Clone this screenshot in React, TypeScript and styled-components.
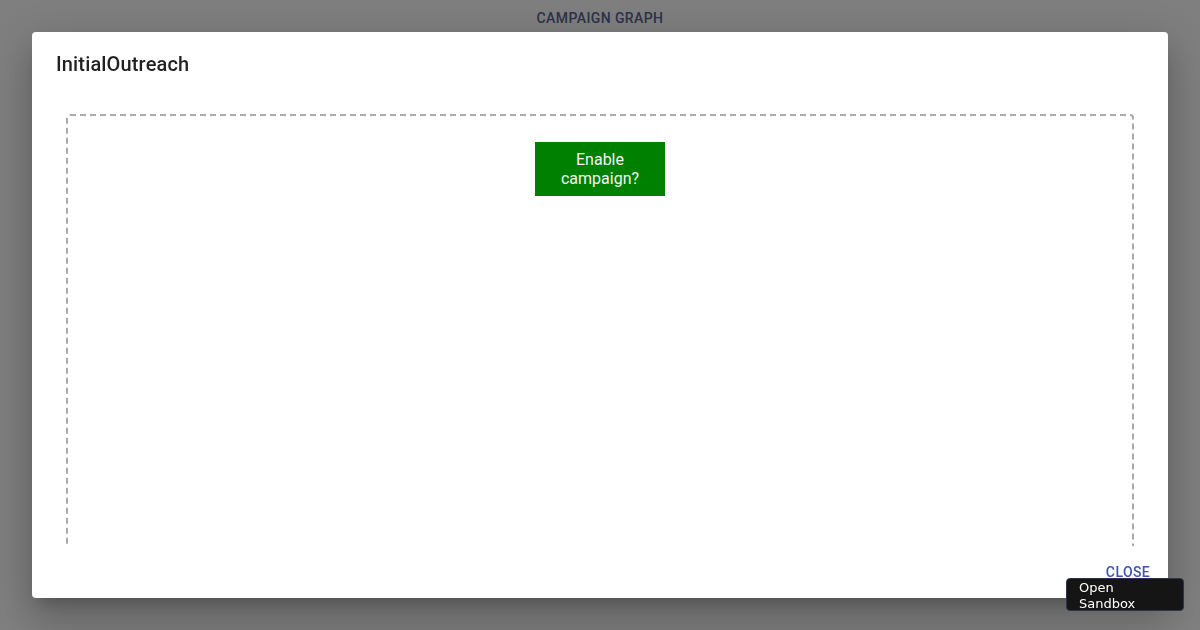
import React from 'react';
import styled, { createGlobalStyle } from 'styled-components';

const GlobalStyle = createGlobalStyle`
  html, body {
    height: 100%;
    margin: 0;
    overflow: hidden;
    background: #fff;
    font-family: Roboto, "Liberation Sans", Arial, sans-serif;
  }
`;

const Page = styled.div`
  height: 100vh;
  display: flex;
  flex-direction: column;
  align-items: center;
`;

const PageHeader = styled.div`
  padding-top: 6px;
  font-size: 14px;
  font-weight: 500;
  line-height: 1.75;
  letter-spacing: 0.02857em;
  text-transform: uppercase;
  color: #5c6494;
`;

const Backdrop = styled.div`
  position: fixed;
  inset: 0;
  background: rgba(0, 0, 0, 0.5);
  display: flex;
  align-items: center;
  justify-content: center;
`;

const DialogPaper = styled.div`
  margin: 32px;
  width: calc(100% - 64px);
  max-height: calc(100% - 64px);
  height: calc(100% - 64px);
  background: #fff;
  border-radius: 4px;
  display: flex;
  flex-direction: column;
  box-shadow: 0px 11px 15px -7px rgba(0, 0, 0, 0.2),
    0px 24px 38px 3px rgba(0, 0, 0, 0.14),
    0px 9px 46px 8px rgba(0, 0, 0, 0.12);
  overflow: hidden;
`;

const DialogTitle = styled.h2`
  margin: 0;
  padding: 16px 24px;
  font-size: 20px;
  font-weight: 500;
  line-height: 1.6;
  letter-spacing: 0.0075em;
  color: rgba(0, 0, 0, 0.87);
`;

const DialogContent = styled.div`
  flex: 1;
  padding: 8px 24px;
  overflow: hidden;
`;

const GraphCanvas = styled.div`
  position: relative;
  margin: 10px;
  height: 640px;
  border: 2px dashed #aaa;
  border-radius: 4px;
`;

const Node = styled.div<{ $bg: string }>`
  position: absolute;
  top: 26px;
  left: 50%;
  transform: translateX(-50%);
  width: 130px;
  box-sizing: border-box;
  padding: 8px 12px;
  background: ${(p) => p.$bg};
  color: #f4f4f4;
  font-size: 16px;
  line-height: 19px;
  text-align: center;
`;

const DialogActions = styled.div`
  display: flex;
  justify-content: flex-end;
  align-items: center;
  padding: 8px;
`;

const TextButton = styled.button`
  min-width: 64px;
  padding: 6px 8px;
  border: none;
  background: transparent;
  border-radius: 4px;
  font-family: Roboto, "Liberation Sans", Arial, sans-serif;
  font-size: 14px;
  font-weight: 500;
  line-height: 1.75;
  letter-spacing: 0.02857em;
  text-transform: uppercase;
  color: #3f51b5;
  cursor: pointer;
`;

const SandboxBadge = styled.a`
  position: fixed;
  right: 16px;
  bottom: 19px;
  width: 118px;
  height: 33px;
  box-sizing: border-box;
  padding: 1px 12px 0;
  background: #151515;
  border: 1px solid #2d3350;
  border-radius: 4px;
  font-family: "DejaVu Sans", Verdana, sans-serif;
  font-size: 13px;
  line-height: 16px;
  color: #fff;
  text-decoration: none;
`;

export default function App() {
  return (
    <>
      <GlobalStyle />
      <Page>
        <PageHeader>Campaign Graph</PageHeader>
      </Page>
      <Backdrop>
        <DialogPaper>
          <DialogTitle>InitialOutreach</DialogTitle>
          <DialogContent>
            <GraphCanvas>
              <Node $bg="#008000">Enable campaign?</Node>
            </GraphCanvas>
          </DialogContent>
          <DialogActions>
            <TextButton>Close</TextButton>
          </DialogActions>
        </DialogPaper>
      </Backdrop>
      <SandboxBadge href="#">Open Sandbox</SandboxBadge>
    </>
  );
}
